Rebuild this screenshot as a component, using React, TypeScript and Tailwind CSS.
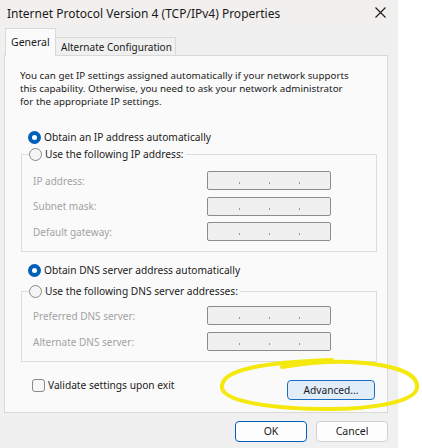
import React from "react";

const font = { fontFamily: '"Noto Sans", "Liberation Sans", sans-serif' };

function Radio({ checked, label }: { checked?: boolean; label: string }) {
  return (
    <div className="flex items-center h-[18px]">
      {checked ? (
        <span className="w-[13px] h-[13px] rounded-full bg-[#005fb8] flex items-center justify-center">
          <span className="w-[5px] h-[5px] rounded-full bg-white" />
        </span>
      ) : (
        <span className="w-[13px] h-[13px] rounded-full border border-[#8a8a8a] bg-[#f5f5f5]" />
      )}
      <span className="ml-[3px] text-[10.2px] text-[#1a1a1a] leading-none">{label}</span>
    </div>
  );
}

function IpBox() {
  return (
    <div className="w-[124px] h-[19px] rounded-[2px] border border-[#8c8c8c] bg-[#f0f0f0] relative">
      <span className="absolute left-[31px] top-[10px] w-[1px] h-[2px] bg-[#9a9a9a]" />
      <span className="absolute left-[61px] top-[10px] w-[1px] h-[2px] bg-[#9a9a9a]" />
      <span className="absolute left-[91px] top-[10px] w-[1px] h-[2px] bg-[#9a9a9a]" />
    </div>
  );
}

function Row({ label }: { label: string }) {
  return (
    <div className="flex items-center h-[19px]">
      <span className="w-[174px] text-[10px] text-[#a3a3a3] leading-none">{label}</span>
      <IpBox />
    </div>
  );
}

export default function App() {
  return (
    <div className="w-[422px] h-[448px] bg-white relative overflow-hidden" style={font}>
      <div className="w-[396px] h-[448px] bg-[#f0f0f0] flex flex-col shadow-[1px_0_3px_rgba(0,0,0,0.12)]">
        {/* title bar */}
        <div className="h-[28px] flex items-center justify-between bg-[#f2f0ef] pl-[7px] pr-[10px]">
          <span className="text-[12px] text-[#1a1a1a] leading-none">
            Internet Protocol Version 4 (TCP/IPv4) Properties
          </span>
          <svg width="11" height="11" viewBox="0 0 11 11" className="mb-[4px]">
            <path d="M0.5 0.5 L10.5 10.5 M10.5 0.5 L0.5 10.5" stroke="#1a1a1a" strokeWidth="1.1" />
          </svg>
        </div>
        {/* tabs */}
        <div className="flex items-end pl-[5px] h-[27px]">
          <div className="h-[28px] w-[51px] bg-[#fafafa] border border-b-0 border-[#d9d9d9] flex items-center pl-[5px] relative z-10 -mb-[1px]">
            <span className="text-[10.5px] text-[#1a1a1a] leading-none">General</span>
          </div>
          <div className="h-[18px] w-[120px] bg-[#f0f0f0] border border-l-0 border-b-0 border-[#d9d9d9] flex items-center pl-[5px]">
            <span className="text-[10px] text-[#1a1a1a] leading-none">Alternate Configuration</span>
          </div>
        </div>
        {/* panel */}
        <div className="ml-[4px] w-[384px] h-[358px] bg-[#fafafa] border border-[#d9d9d9] flex flex-col pl-[15px] pt-[13px]">
          <p className="text-[9.8px] leading-[13px] text-[#1a1a1a] whitespace-nowrap">
            You can get IP settings assigned automatically if your network supports
            <br />
            this capability. Otherwise, you need to ask your network administrator
            <br />
            for the appropriate IP settings.
          </p>
          <div className="mt-[20px] ml-[8px]">
            <Radio checked label="Obtain an IP address automatically" />
          </div>
          <fieldset className="ml-[1px] w-[356px] border border-[#dcdcdc] pb-[10px] -mt-[1px]">
            <legend className="ml-[7px] pr-[2px]">
              <Radio label="Use the following IP address:" />
            </legend>
            <div className="flex flex-col gap-[6.5px] pt-[8px] pl-[11px]">
              <Row label="IP address:" />
              <Row label="Subnet mask:" />
              <Row label="Default gateway:" />
            </div>
          </fieldset>
          <div className="mt-[9px] ml-[8px]">
            <Radio checked label="Obtain DNS server address automatically" />
          </div>
          <fieldset className="ml-[1px] w-[356px] border border-[#dcdcdc] pb-[10px] mt-[3px]">
            <legend className="ml-[7px] pr-[2px]">
              <Radio label="Use the following DNS server addresses:" />
            </legend>
            <div className="flex flex-col gap-[7px] pt-[6px] pl-[11px]">
              <Row label="Preferred DNS server:" />
              <Row label="Alternate DNS server:" />
            </div>
          </fieldset>
          <div className="flex items-start mt-[16px]">
            <div className="flex items-center ml-[12px] mt-[1px]">
              <span className="w-[13px] h-[13px] rounded-[3px] border border-[#8a8a8a] bg-[#f7f7f7]" />
              <span className="ml-[3px] text-[10.2px] text-[#1a1a1a] leading-none">Validate settings upon exit</span>
            </div>
            <button className="ml-auto mr-[12px] mt-[2px] w-[88px] h-[20px] rounded-[4px] border border-[#1a6ec2] bg-[#e1eefa] text-[10.2px] text-[#1a1a1a] leading-none">
              Advanced...
            </button>
          </div>
        </div>
        {/* bottom buttons */}
        <div className="flex justify-end gap-[9px] pr-[8px] mt-[8px]">
          <button className="w-[72px] h-[21px] rounded-[4px] border border-[#005fb8] bg-[#fdfdfd] text-[10.5px] text-[#1a1a1a] leading-none">
            OK
          </button>
          <button className="w-[72px] h-[21px] rounded-[4px] border border-[#d0d0d0] bg-[#fdfdfd] text-[10.5px] text-[#1a1a1a] leading-none">
            Cancel
          </button>
        </div>
      </div>
      {/* yellow hand-drawn ellipse annotation */}
      <svg className="absolute left-0 top-0 pointer-events-none" width="422" height="448" viewBox="0 0 422 448">
        <path
          d="M332 360 C300 361 272 363 250 368 C228 373 221 380 222 388 C224 400 262 408 320 409 C370 410 415 402 417 388 C419 372 390 364 350 362 C320 361 300 364 282 367"
          fill="none"
          stroke="#f4e80c"
          strokeWidth="4"
          strokeLinecap="round"
        />
      </svg>
    </div>
  );
}
